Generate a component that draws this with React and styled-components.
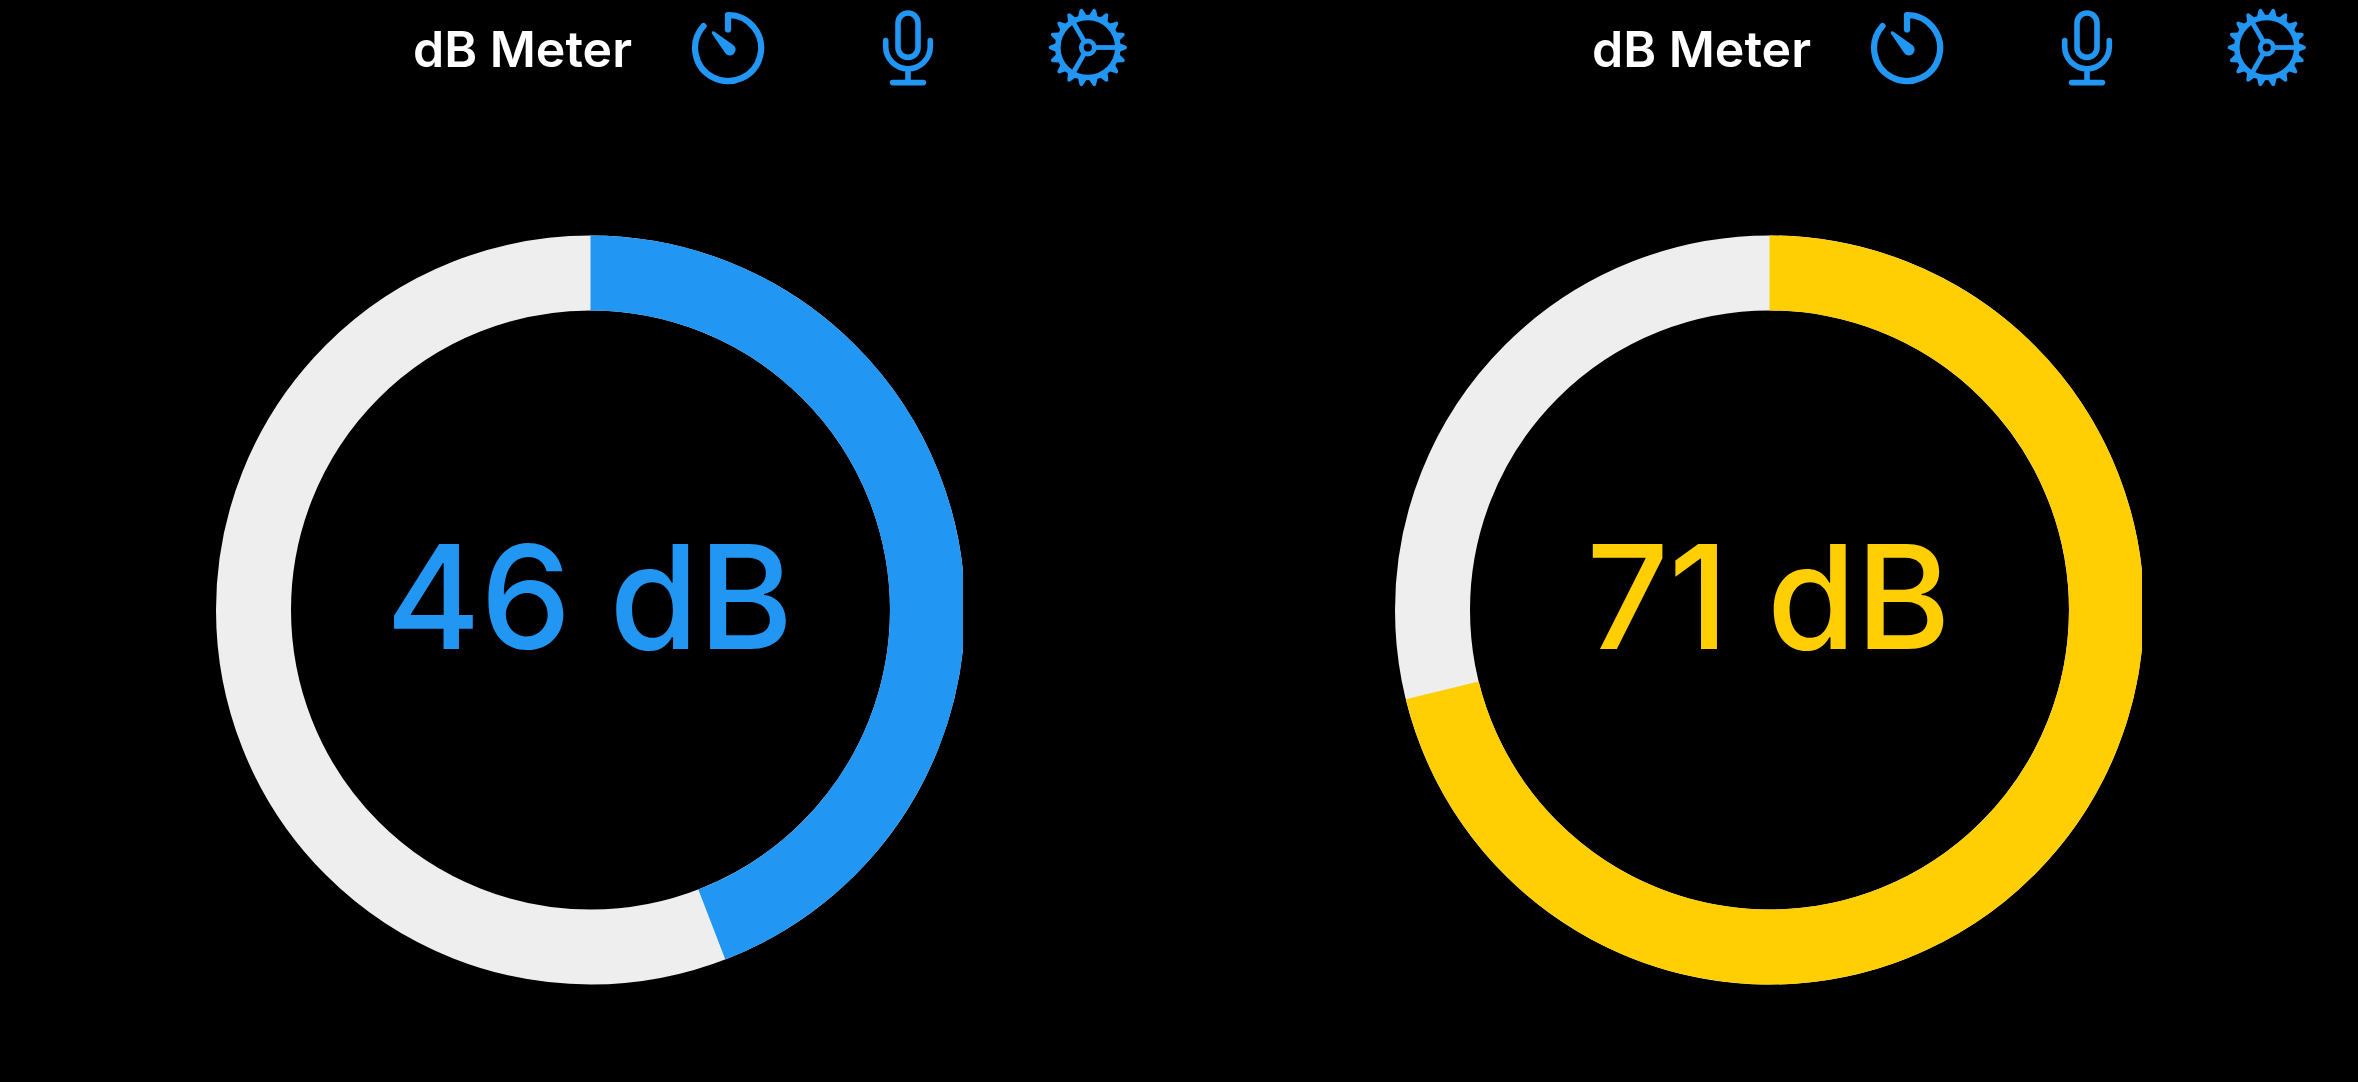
import React from 'react';
import styled, { createGlobalStyle } from 'styled-components';

const GlobalStyle = createGlobalStyle`
  body {
    margin: 0;
    background-color: #000000;
    font-family: 'Inter', 'Liberation Sans', sans-serif;
  }
`;

const Container = styled.main`
  display: grid;
  grid-template-columns: 1fr 1fr;
  min-height: 100vh;
  background-color: #000000;
`;

const Meter = styled.section`
  display: flex;
  flex-direction: column;
  align-items: center;
  min-width: 0;
  overflow: hidden;
`;

const Header = styled.header`
  align-self: stretch;
  display: flex;
  align-items: center;
  justify-content: flex-end;
  padding: 7px 51px 0 0;
`;

const Title = styled.h1`
  margin: 0 56px 0 0;
  padding-top: 4px;
  font-size: 50px;
  line-height: 60px;
  font-weight: 600;
  white-space: nowrap;
  color: #ffffff;
`;

const Actions = styled.nav`
  display: flex;
  gap: 100px;
`;

const IconButton = styled.button`
  width: 80px;
  height: 80px;
  padding: 0;
  border: none;
  background: none;
  color: #2196f3;
  cursor: pointer;

  svg {
    display: block;
  }
`;

const Dial = styled.div`
  display: grid;
  place-items: center;
  width: 80%;
  max-width: 747px;
  margin: 148px 0 96px;
  color: ${({ $color }) => $color};
`;

const Ring = styled.svg`
  grid-area: 1 / 1;
  display: block;
  width: 100%;
  height: auto;
  overflow: hidden;
`;

const Reading = styled.output`
  grid-area: 1 / 1;
  padding-bottom: 26px;
  font-size: 144px;
  line-height: 176px;
  font-weight: 500;
  white-space: nowrap;
`;

const TEETH = Array.from({ length: 18 }, (_, i) => i * 20);
const SPOKES = [ 0, 120, 240 ];

const TimerIcon = () => (
  <svg width="80" height="80" viewBox="0 0 80 80" fill="none" aria-hidden="true">
    <path
      d="M40 22.5V8A33 33 0 1 1 15.5 19"
      stroke="currentColor"
      strokeWidth="6.2"
      strokeLinecap="round"
      strokeLinejoin="round"
    />
    <path
      d="M24.2 24.5Q25.2 23.7 26.6 24.7L45.2 37.9A5.8 5.8 0 1 1 37.2 46.1L24.2 26.9Q23.2 25.5 24.2 24.5Z"
      fill="currentColor"
    />
  </svg>
);

const MicIcon = () => (
  <svg
    width="80"
    height="80"
    viewBox="0 0 80 80"
    fill="none"
    stroke="currentColor"
    strokeWidth="5.6"
    strokeLinecap="round"
    aria-hidden="true"
  >
    <rect x="30" y="6" width="20" height="44.4" rx="10" />
    <path d="M17.7 33.5V39.5A22.3 22.3 0 0 0 62.3 39.5V33.5" />
    <path d="M40 62V75.6M24.6 75.6H55.4" />
  </svg>
);

const GearIcon = () => (
  <svg width="80" height="80" viewBox="0 0 80 80" fill="none" stroke="currentColor" aria-hidden="true">
    <circle cx="39.8" cy="40.5" r="30" strokeWidth="5.6" />
    <circle cx="39.8" cy="40.5" r="6.5" strokeWidth="4.8" />
    {SPOKES.map((angle) => (
      <path key={angle} d="M47.6 40.5H69" strokeWidth="4.8" transform={`rotate(${angle} 39.8 40.5)`} />
    ))}
    {TEETH.map((angle) => (
      <path
        key={angle}
        d="M71 35.9L77.2 38.5Q79 39 79 40.5Q79 42 77.2 42.5L71 45.1Z"
        fill="currentColor"
        stroke="none"
        transform={`rotate(${angle} 39.8 40.5)`}
      />
    ))}
  </svg>
);

const CENTER = 374.5;
const OUTER = 374.5;
const INNER = 299.5;

// sector of the ring, clockwise from twelve o'clock
const ringSector = (degrees) => {
  const rad = (degrees * Math.PI) / 180;
  const large = degrees > 180 ? 1 : 0;
  const point = (r) => `${CENTER + r * Math.sin(rad)} ${CENTER - r * Math.cos(rad)}`;
  return [
    `M${CENTER} ${CENTER - OUTER}`,
    `A${OUTER} ${OUTER} 0 ${large} 1 ${point(OUTER)}`,
    `L${point(INNER)}`,
    `A${INNER} ${INNER} 0 ${large} 0 ${CENTER} ${CENTER - INNER}`,
    'Z',
  ].join('');
};

const meters = [
  { id: 'quiet', level: 46, sweep: 158.9, color: '#2196f3' },
  { id: 'loud', level: 71, sweep: 256.2, color: '#ffcf03' },
];

function SoundMeter({ level, sweep, color }) {
  return (
    <Meter>
      <Header>
        <Title>dB Meter</Title>
        <Actions>
          <IconButton type="button" aria-label="Timer">
            <TimerIcon />
          </IconButton>
          <IconButton type="button" aria-label="Microphone">
            <MicIcon />
          </IconButton>
          <IconButton type="button" aria-label="Settings">
            <GearIcon />
          </IconButton>
        </Actions>
      </Header>
      <Dial $color={color}>
        <Ring viewBox="0 0 747 750" aria-hidden="true">
          <g transform="translate(0 0.5)">
            <circle cx={CENTER} cy={CENTER} r="337" fill="none" stroke="#eeeeee" strokeWidth="75" />
            <path d={ringSector(sweep)} fill="currentColor" />
          </g>
        </Ring>
        <Reading>{level} dB</Reading>
      </Dial>
    </Meter>
  );
}

function App() {
  return (
    <>
      <GlobalStyle />
      <Container>
        {meters.map((meter) => (
          <SoundMeter key={meter.id} {...meter} />
        ))}
      </Container>
    </>
  );
}

export default App;
